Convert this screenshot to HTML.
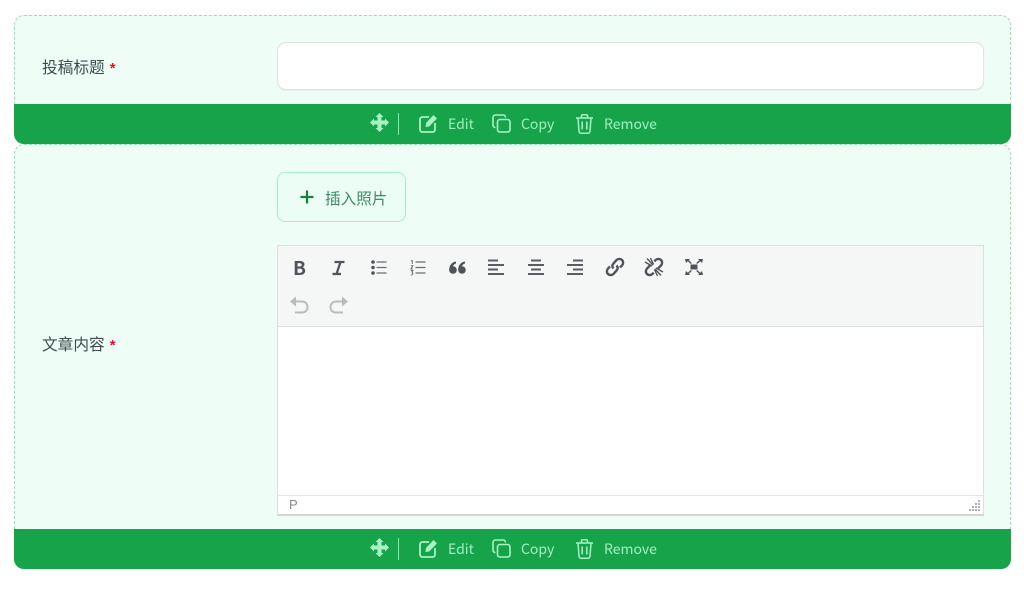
<!DOCTYPE html>
<html lang="zh">
<head>
<meta charset="utf-8">
<title>Form</title>
<style>
html,body{margin:0;padding:0;background:#fff;}
body{width:1024px;height:590px;position:relative;overflow:hidden;font-family:"Liberation Sans","Noto Sans CJK SC",sans-serif;}
.a{position:absolute;box-sizing:border-box;}
.block{left:14px;width:997px;background:#eefdf5;border:1px dashed #8fe3b4;border-radius:10px;}
.bar{left:14px;width:997px;height:40px;background:#16a34a;border-radius:0 0 10px 10px;}
.label{left:42px;font-size:15.700px;line-height:22px;color:#3f4a4f;white-space:nowrap;font-family:"Noto Sans CJK SC",sans-serif;}
.label b{color:#e8112d;font-family:"Liberation Sans",sans-serif;font-size:15px;margin-left:5px;}
.t{line-height:20px;color:#a3efc0;white-space:nowrap;font-family:"Noto Sans CJK SC","Liberation Sans",sans-serif;font-size:14px;}
svg{position:absolute;display:block;overflow:visible;}
</style>
</head>
<body>
<div class="a block" style="top:15px;height:129px;"></div>
<div class="a bar" style="top:104px;"></div>
<div class="a block" style="top:144px;height:425px;"></div>
<div class="a bar" style="top:529px;"></div>

<div class="a label" style="top:56px;">投稿标题<b>*</b></div>
<div class="a label" style="top:333px;">文章内容<b>*</b></div>

<div class="a" style="left:277px;top:42px;width:707px;height:48px;background:#fff;border:1px solid #dfe3e6;border-radius:9px;box-shadow:0 1px 1px rgba(0,0,0,.05);"></div>

<div class="a" style="left:277px;top:172px;width:129px;height:50px;background:#ecfdf5;border:1px solid #a7ecd0;border-radius:8px;"></div>
<svg style="left:300px;top:190px;" width="14" height="14" viewBox="0 0 14 14"><path d="M7 0.500V13.500M0.500 7H13.500" stroke="#15803d" stroke-width="2.200"/></svg>
<div class="a" style="left:325px;top:187px;font-size:15.600px;line-height:22px;color:#3f8a68;white-space:nowrap;font-family:'Noto Sans CJK SC',sans-serif;">插入照片</div>

<!-- editor -->
<div class="a" style="left:277px;top:245px;width:707px;height:271px;background:#fff;border:1px solid #dcdedf;border-bottom:2px solid #d2d4d6;"></div>
<div class="a" style="left:278px;top:246px;width:705px;height:81px;background:#f5f6f6;border-bottom:1px solid #dcdedf;"></div>
<div class="a" style="left:278px;top:495px;width:705px;height:1px;background:#e4e5e6;"></div>
<div class="a" style="left:289px;top:498px;font-size:13px;line-height:14px;color:#85888b;">P</div>

<!-- resize grip -->
<svg style="left:969px;top:500px;" width="11" height="11" viewBox="0 0 11 11" fill="#b0b2b4"><path d="M9 0h2v2H9zM6 3h2v2H6zM9 3h2v2H9zM3 6h2v2H3zM6 6h2v2H6zM9 6h2v2H9zM0 9h2v2H0zM3 9h2v2H3zM6 9h2v2H6zM9 9h2v2H9z"/></svg>

<!-- bold -->
<div class="a" style="left:293px;top:256px;font:700 19px/24px 'Noto Sans CJK SC','Liberation Sans',sans-serif;color:#50545a;">B</div>
<!-- italic -->
<svg style="left:332px;top:261px;" width="13" height="14" viewBox="0 0 13 14"><path d="M2.500 1H12.500M.5 13H9M8.500 1 4.500 13" stroke="#50545a" stroke-width="2.200" fill="none"/></svg>
<!-- ul -->
<svg style="left:371px;top:260px;" width="16" height="15" viewBox="0 0 16 15"><g fill="#50545a"><circle cx="2" cy="2" r="1.800"/><circle cx="2" cy="7.500" r="1.800"/><circle cx="2" cy="13" r="1.800"/></g><path d="M5.500 2H15.500M5.500 7.500H15.500M5.500 13H15.500" stroke="#6a6e73" stroke-width="1.200"/></svg>
<!-- ol -->
<svg style="left:410px;top:260px;" width="16" height="15" viewBox="0 0 16 15"><path d="M5.500 2H15.500M5.500 7.500H15.500M5.500 13H15.500" stroke="#6a6e73" stroke-width="1.200"/><path d="M1 1 2.200.5V4M.8 5.800H3L.8 9H3M.8 10.500H3L1.800 12 3 13.200 2 15H.8" stroke="#50545a" stroke-width=".8" fill="none"/></svg>
<!-- quote -->
<svg style="left:449px;top:261px;" width="17" height="13" viewBox="0 0 17 13" fill="#50545a"><circle cx="4" cy="9" r="3.800"/><circle cx="13" cy="9" r="3.800"/><path d="M.2 9C.2 4 3 1 7 .5V2.500C5 3 3.500 5 3.800 7ZM9.200 9C9.200 4 12 1 16 .5V2.500C14 3 12.500 5 12.800 7Z"/></svg>
<!-- align left -->
<svg style="left:488px;top:259px;" width="16" height="16" viewBox="0 0 16 16"><path d="M0 1.500H10M0 6H16M0 10.500H10M0 15H16" stroke="#5a5d62" stroke-width="2"/></svg>
<!-- align center -->
<svg style="left:528px;top:259px;" width="16" height="16" viewBox="0 0 16 16"><path d="M3 1.500H13M0 6H16M3 10.500H13M0 15H16" stroke="#5a5d62" stroke-width="2"/></svg>
<!-- align right -->
<svg style="left:567px;top:259px;" width="16" height="16" viewBox="0 0 16 16"><path d="M6 1.500H16M0 6H16M6 10.500H16M0 15H16" stroke="#5a5d62" stroke-width="2"/></svg>
<!-- link -->
<svg style="left:605px;top:257px;" width="20" height="20" viewBox="0 0 20 20" fill="none" stroke="#50545a" stroke-width="2.400"><path d="M8.500 11.500C6.800 9.800 7 8 8.500 6.500L11.200 3.300C13 1.500 15.500 1.500 17 3C18.500 4.500 18.500 7 16.800 8.700L15 10.500"/><path d="M11.500 8.500C13.200 10.200 13 12 11.500 13.500L8.800 16.700C7 18.500 4.500 18.500 3 17C1.500 15.500 1.500 13 3.200 11.300L5 9.500"/></svg>
<!-- unlink -->
<svg style="left:644px;top:257px;" width="20" height="20" viewBox="0 0 20 20" fill="none" stroke="#50545a" stroke-width="2.400"><path d="M10.500 4.500 11.200 3.300C13 1.500 15.500 1.500 17 3C18.500 4.500 18.500 7 16.800 8.700L13.500 12"/><path d="M9.500 15.500 8.800 16.700C7 18.500 4.500 18.500 3 17C1.500 15.500 1.500 13 3.200 11.300L6.500 8"/><path d="M3 1.500 9 8M1 5 8 9M6.500 1 9.500 7.500M17 18.500 11 12M19 15 12 11M13.500 19 10.500 12.500" stroke-width="1.400"/></svg>
<!-- fullscreen -->
<svg style="left:685px;top:259px;" width="18" height="16" viewBox="0 0 18 16" fill="#50545a"><rect x="5.500" y="5.500" width="7" height="5"/><path d="M0 0H5L3.800 1.200 6.800 4 5.800 5 2.800 2.200 1 4ZM18 0H13L14.200 1.200 11.200 4 12.200 5 15.200 2.200 17 4ZM0 16H5L3.800 14.800 6.800 12 5.800 11 2.800 13.800 1 12ZM18 16H13L14.200 14.800 11.200 12 12.200 11 15.200 13.800 17 12Z"/></svg>
<!-- undo -->
<svg style="left:290px;top:296px;" width="19" height="18" viewBox="0 0 19 18" fill="none"><path d="M3 5.500H12C15.500 5.500 17.500 8 17.500 11C17.500 14 15.500 16.500 12 16.500H5" stroke="#b9bbbd" stroke-width="2"/><path d="M0 5.500 6 0.500V10.500Z" fill="#b9bbbd"/></svg>
<!-- redo -->
<svg style="left:329px;top:296px;" width="19" height="18" viewBox="0 0 19 18" fill="none"><path d="M16 5.500H7C3.500 5.500 1.500 8 1.500 11C1.500 14 3.500 16.500 7 16.500H14" stroke="#b9bbbd" stroke-width="2"/><path d="M19 5.500 13 0.500V10.500Z" fill="#b9bbbd"/></svg>

<!-- bar 1 -->
<svg style="left:370px;top:113px;" width="19" height="19" viewBox="0 0 19 19" fill="#a7f3c4"><path d="M9.500 0 13.500 4H11.500V7.500H15V5.500L19 9.500 15 13.500V11.500H11.500V15H13.500L9.500 19 5.500 15H7.500V11.500H4V13.500L0 9.500 4 5.500V7.500H7.500V4H5.500Z"/></svg>
<div class="a" style="left:398px;top:113px;width:1px;height:22px;background:#8fe3ae;"></div>
<svg style="left:419px;top:114px;" width="19" height="19" viewBox="0 0 19 19" fill="none" stroke="#a7f3c4"><path d="M10 3H3.500C2.200 3 1 4 1 5.500V15.500C1 17 2.200 18 3.500 18H13.500C15 18 16 17 16 15.500V9" stroke-width="1.800"/><path d="M7 9 14.500 1 18 4.500 10.200 12.500 6.500 13Z" fill="#a7f3c4" stroke="none"/></svg>
<div class="a t" style="left:448px;top:114px;">Edit</div>
<svg style="left:492px;top:114px;" width="19" height="19" viewBox="0 0 19 19" fill="none" stroke="#a7f3c4" stroke-width="1.600"><path d="M3.500 13.500C2 13.500 1 12.500 1 11V3.500C1 2 2 1 3.500 1H11C12.500 1 13.500 2 13.500 3.500"/><rect x="5.500" y="5.500" width="12.500" height="12.500" rx="2.500"/></svg>
<div class="a t" style="left:521px;top:114px;">Copy</div>
<svg style="left:576px;top:114px;" width="17" height="20" viewBox="0 0 17 20" fill="none" stroke="#a7f3c4" stroke-width="1.500"><path d="M0 4H17M5.500 4V1.800C5.500 1 6 .8 6.800.8H10.200C11 .8 11.500 1 11.500 1.800V4M2 4 3 17C3 18.400 4 19.200 5 19.200H12C13 19.200 14 18.400 14 17L15 4M6.200 7.500V15.500M10.800 7.500V15.500"/></svg>
<div class="a t" style="left:604px;top:114px;">Remove</div>

<!-- bar 2 -->
<svg style="left:370px;top:538px;" width="19" height="19" viewBox="0 0 19 19" fill="#a7f3c4"><path d="M9.500 0 13.500 4H11.500V7.500H15V5.500L19 9.500 15 13.500V11.500H11.500V15H13.500L9.500 19 5.500 15H7.500V11.500H4V13.500L0 9.500 4 5.500V7.500H7.500V4H5.500Z"/></svg>
<div class="a" style="left:398px;top:538px;width:1px;height:22px;background:#8fe3ae;"></div>
<svg style="left:419px;top:539px;" width="19" height="19" viewBox="0 0 19 19" fill="none" stroke="#a7f3c4"><path d="M10 3H3.500C2.200 3 1 4 1 5.500V15.500C1 17 2.200 18 3.500 18H13.500C15 18 16 17 16 15.500V9" stroke-width="1.800"/><path d="M7 9 14.500 1 18 4.500 10.200 12.500 6.500 13Z" fill="#a7f3c4" stroke="none"/></svg>
<div class="a t" style="left:448px;top:539px;">Edit</div>
<svg style="left:492px;top:539px;" width="19" height="19" viewBox="0 0 19 19" fill="none" stroke="#a7f3c4" stroke-width="1.600"><path d="M3.500 13.500C2 13.500 1 12.500 1 11V3.500C1 2 2 1 3.500 1H11C12.500 1 13.500 2 13.500 3.500"/><rect x="5.500" y="5.500" width="12.500" height="12.500" rx="2.500"/></svg>
<div class="a t" style="left:521px;top:539px;">Copy</div>
<svg style="left:576px;top:539px;" width="17" height="20" viewBox="0 0 17 20" fill="none" stroke="#a7f3c4" stroke-width="1.500"><path d="M0 4H17M5.500 4V1.800C5.500 1 6 .8 6.800.8H10.200C11 .8 11.500 1 11.500 1.800V4M2 4 3 17C3 18.400 4 19.200 5 19.200H12C13 19.200 14 18.400 14 17L15 4M6.200 7.500V15.500M10.800 7.500V15.500"/></svg>
<div class="a t" style="left:604px;top:539px;">Remove</div>
</body>
</html>
